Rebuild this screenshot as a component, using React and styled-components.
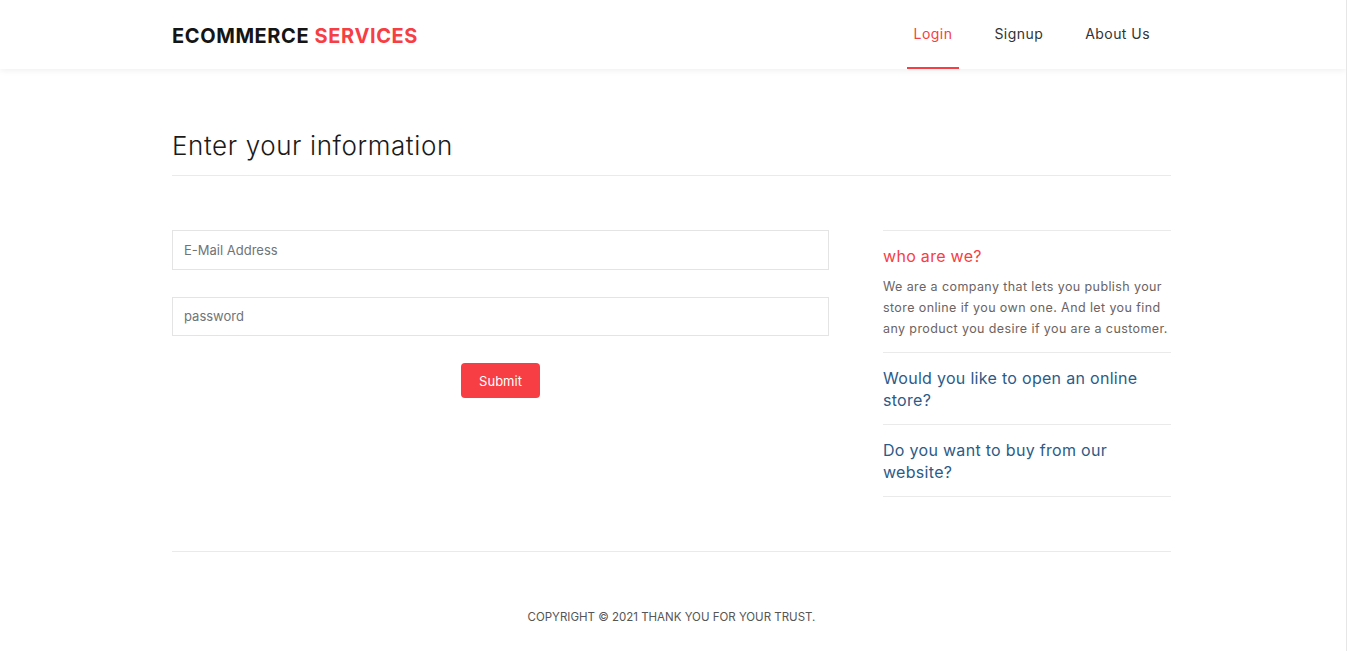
import React from "react";
import styled, { createGlobalStyle } from "styled-components";

const Global = createGlobalStyle`
  html, body { margin: 0; padding: 0; background: #fff; }
  body {
    font-family: "Inter", "Open Sans", sans-serif;
    color: #222;
    border-right: 1px solid #e6e6e6;
    min-height: 651px;
    box-sizing: border-box;
  }
  #root { width: 1343px; }
  * { box-sizing: border-box; }
`;

const RED = "#f63e44";

const Header = styled.header`
  height: 69px;
  background: #fff;
  box-shadow: 0 2px 6px rgba(0, 0, 0, 0.06);
  position: relative;
  z-index: 1;
  width: 1346px;
`;

const Container = styled.div`
  width: 999px;
  margin: 0 auto;
`;

const HeaderInner = styled(Container)`
  height: 100%;
  display: flex;
  align-items: center;
  justify-content: space-between;
  padding-top: 2px;
  margin-left: 172px;
`;

const Logo = styled.div`
  font-size: 20px;
  font-weight: 700;
  color: #151515;
  letter-spacing: 0.6px;
  span { color: ${RED}; }
`;

const Nav = styled.nav`
  display: flex;
  height: 100%;
  margin-right: 14px;
`;

const NavItem = styled.a`
  display: flex;
  align-items: center;
  height: 100%;
  padding: 0 7px 2px;
  margin-left: ${(p) => (p.$first ? "0" : "28px")};
  font-size: 14px;
  letter-spacing: 0.45px;
  color: ${(p) => (p.$active ? RED : "#333")};
  border-bottom: 2px solid ${(p) => (p.$active ? RED : "transparent")};
  text-decoration: none;
`;

const Main = styled(Container)`
  padding-top: 61px;
`;

const Title = styled.h1`
  margin: 0;
  font-size: 26px;
  font-weight: 300;
  letter-spacing: 0.6px;
  color: #1a1a1a;
  padding-bottom: 14px;
  border-bottom: 1px solid #eaeaea;
`;

const Columns = styled.div`
  display: flex;
  justify-content: space-between;
  margin-top: 54px;
`;

const Form = styled.form`
  width: 657px;
  display: flex;
  flex-direction: column;
`;

const Input = styled.input`
  height: 39.5px;
  border: 1px solid #e4e4e4;
  padding: 0 11px;
  font-family: inherit;
  font-size: 13px;
  color: #333;
  margin-bottom: 27px;
  outline: none;
  &::placeholder { color: #6f7478; }
`;

const Submit = styled.button`
  align-self: center;
  width: 79px;
  height: 35px;
  border: none;
  border-radius: 4px;
  background: ${RED};
  color: #fff;
  font-family: inherit;
  font-size: 13px;
`;

const Aside = styled.aside`
  width: 288px;
  border-top: 1px solid #eaeaea;
`;

const Block = styled.div`
  padding: 14px 0 13px;
  border-bottom: 1px solid #eaeaea;
`;

const AsideTitle = styled.h3`
  margin: 0;
  font-size: 16px;
  font-weight: 400;
  line-height: 22px;
  letter-spacing: 0.3px;
  color: ${(p) => (p.$red ? RED : "#2b5b87")};
`;

const AsideText = styled.p`
  margin: 9px 0 0;
  font-size: 12.5px;
  line-height: 21px;
  letter-spacing: 0.4px;
  color: #6c6363;
`;

const Footer = styled(Container)`
  margin-top: 54px;
  border-top: 1px solid #eaeaea;
  padding-top: 58px;
  text-align: center;
  font-size: 11.5px;
  color: #555;
  text-transform: uppercase;
`;

export default function App() {
  return (
    <>
      <Global />
      <Header>
        <HeaderInner>
          <Logo>
            ECOMMERCE <span>SERVICES</span>
          </Logo>
          <Nav>
            <NavItem href="#" $active $first>Login</NavItem>
            <NavItem href="#">Signup</NavItem>
            <NavItem href="#">About Us</NavItem>
          </Nav>
        </HeaderInner>
      </Header>
      <Main>
        <Title>Enter your information</Title>
        <Columns>
          <Form onSubmit={(e) => e.preventDefault()}>
            <Input placeholder="E-Mail Address" />
            <Input placeholder="password" type="password" />
            <Submit type="submit">Submit</Submit>
          </Form>
          <Aside>
            <Block>
              <AsideTitle $red>who are we?</AsideTitle>
              <AsideText>
                We are a company that lets you publish your store online if you own one. And let you find any product you desire if you are a customer.
              </AsideText>
            </Block>
            <Block>
              <AsideTitle>Would you like to open an online store?</AsideTitle>
            </Block>
            <Block>
              <AsideTitle>Do you want to buy from our website?</AsideTitle>
            </Block>
          </Aside>
        </Columns>
      </Main>
      <Footer>Copyright © 2021 Thank you for your trust.</Footer>
    </>
  );
}
